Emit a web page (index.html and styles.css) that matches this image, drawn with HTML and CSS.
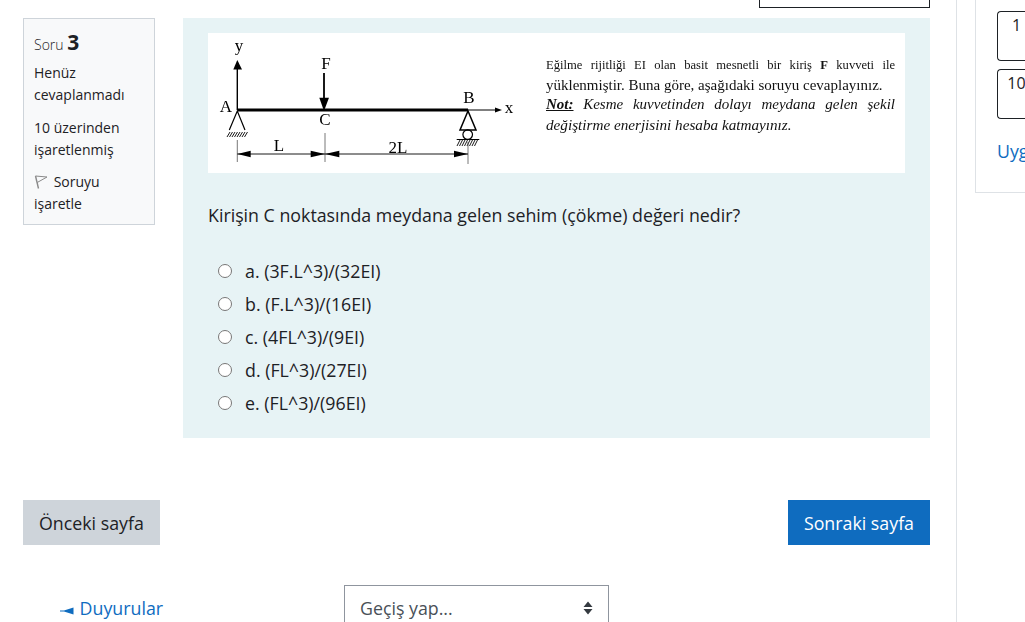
FILE: index.html
```html
<!DOCTYPE html>
<html lang="en">

<head>
    <title>Soru 3</title>
    <link rel="stylesheet" href="styles.css">
</head>

<body>
    <div class="page">
        <div class="main-col">
            <div class="top-row">
                <div class="top-box"></div>
            </div>

            <div class="question-row">
                <div class="info-box">
                    <h3 class="q-title">Soru <span class="q-no">3</span></h3>
                    <div class="q-state">Henüz cevaplanmadı</div>
                    <div class="q-state">10 üzerinden işaretlenmiş</div>
                    <div class="q-flag">
                        <svg class="flag-icon" width="14" height="14" viewBox="0 0 14 14">
                            <path d="M1.5 1 L13 2 L3.2 7.5" fill="none" stroke="#8a8a8a" stroke-width="1" />
                            <path d="M1.5 1 L4.5 13.5" fill="none" stroke="#8a8a8a" stroke-width="1.4" />
                        </svg>
                        Soruyu işaretle
                    </div>
                </div>

                <div class="question-box">
                    <div class="figure">
                        <svg class="beam" width="338" height="140" viewBox="0 0 338 140">
                            <g stroke="#000" fill="none">
                                <path d="M29.3 77 V34" stroke-width="1.4" />
                                <path d="M29.3 77 H260" stroke-width="3" />
                                <path d="M260 77 H290" stroke-width="1" />
                                <path d="M116 40 V68" stroke-width="1.8" />
                                <path d="M21.3 97 L29.3 78 L37 97" stroke-width="1.2" />
                                <path d="M260 78 L252 97 H268 Z" stroke-width="1.5" />
                                <circle cx="259.7" cy="101.6" r="4.8" stroke-width="1.2" />
                                <path d="M19 104 L22 99 M21.5 104 L24.5 99 M24 104 L27 99 M26.5 104 L29.5 99 M29 104 L32 99 M31.5 104 L34.5 99 M34 104 L37 99 M36.5 104 L39.5 99" stroke-width="0.9" />
                                <path d="M248.7 106.5 H271.3" stroke-width="1" />
                                <path d="M249 113 L252 107 M251.5 113 L254.5 107 M254 113 L257 107 M256.5 113 L259.5 107 M259 113 L262 107 M261.5 113 L264.5 107 M264 113 L267 107 M266.5 113 L269.5 107" stroke-width="0.9" />
                                <path d="M29.3 107 V129 M117 100 V129 M260 109 V131" stroke="#555" stroke-width="0.8" />
                                <path d="M29.3 121 H260" stroke-width="0.9" />
                            </g>
                            <g fill="#000">
                                <path d="M29.3 27 L25.3 36.5 H34 Z" />
                                <path d="M116 78 L111.3 64.7 H121 Z" />
                                <path d="M294 77 L287 74.5 V79.5 Z" />
                                <path d="M29.3 121 L42.7 117.7 V124.3 Z" />
                                <path d="M117 121 L102.7 117.7 V124.3 Z" />
                                <path d="M117 121 L131.3 117.7 V124.3 Z" />
                                <path d="M260 121 L246 117.7 V124.3 Z" />
                            </g>
                            <g class="beam-label">
                                <text x="31" y="18">y</text>
                                <text x="118" y="36">F</text>
                                <text x="18" y="79">A</text>
                                <text x="117" y="92">C</text>
                                <text x="261" y="70">B</text>
                                <text x="301" y="80">x</text>
                                <text x="71" y="118">L</text>
                                <text x="190" y="120">2L</text>
                            </g>
                        </svg>
                        <div class="figure-text">
                            <p>Eğilme rijitliği EI olan basit mesnetli bir kiriş <b>F</b> kuvveti ile</p>
                            <p class="big-line">yüklenmiştir. Buna göre, aşağıdaki soruyu cevaplayınız.</p>
                            <p class="note"><b><u>Not:</u></b> Kesme kuvvetinden dolayı meydana gelen şekil</p>
                            <p class="note-last">değiştirme enerjisini hesaba katmayınız.</p>
                        </div>
                    </div>

                    <p class="question-text">Kirişin C noktasında meydana gelen sehim (çökme) değeri nedir?</p>

                    <div class="answers">
                        <label class="answer"><input type="radio" name="q3">a. (3F.L^3)/(32EI)</label>
                        <label class="answer"><input type="radio" name="q3">b. (F.L^3)/(16EI)</label>
                        <label class="answer"><input type="radio" name="q3">c. (4FL^3)/(9EI)</label>
                        <label class="answer"><input type="radio" name="q3">d. (FL^3)/(27EI)</label>
                        <label class="answer"><input type="radio" name="q3">e. (FL^3)/(96EI)</label>
                    </div>
                </div>
            </div>

            <div class="nav-row">
                <button type="button" class="btn btn-grey">Önceki sayfa</button>
                <button type="button" class="btn btn-blue">Sonraki sayfa</button>
            </div>

            <div class="bottom-row">
                <a class="back-link" href="#">
                    <svg class="back-icon" width="14" height="8" viewBox="0 0 14 8"><path d="M0 3.4 H4 L13.5 0.5 V7.5 L4 4.6 H0 Z" fill="#0f6cbf" /></svg>
                    Duyurular
                </a>
                <div class="jump-select">
                    <span>Geçiş yap...</span>
                    <svg width="10" height="14" viewBox="0 0 10 14"><path d="M5 0.5 L9.5 6 H0.5 Z M5 13.5 L9.5 8 H0.5 Z" fill="#343a40" /></svg>
                </div>
            </div>
        </div>

        <div class="side-col">
            <div class="side-block">
                <div class="side-input">1</div>
                <div class="side-input">10</div>
                <a class="side-link" href="#">Uygula</a>
            </div>
        </div>
    </div>
</body>

</html>
```

FILE: styles.css
```css
html,
body {
    margin: 0;
    padding: 0;
    background-color: #fff;
    overflow: hidden;
}

body {
    font-family: "Open Sans", sans-serif;
    font-size: 17.8px;
    color: #1d2125;
}

.page {
    display: flex;
    height: 622px;
    width: 1025px;
    overflow: hidden;
}

.main-col {
    width: 957px;
    flex-shrink: 0;
    box-sizing: border-box;
    padding: 0 26px 0 23px;
    border-right: 1px solid #dee2e6;
}

.top-row {
    display: flex;
    justify-content: flex-end;
    height: 18px;
}

.top-box {
    width: 169px;
    height: 7px;
    border: 1px solid #1d2125;
    border-top: none;
}

.question-row {
    display: flex;
    align-items: flex-start;
    gap: 28px;
}

.info-box {
    width: 132px;
    height: 207px;
    flex-shrink: 0;
    box-sizing: border-box;
    padding: 10px 10px;
    background-color: #f8f9fa;
    border: 1px solid #ced4da;
    font-size: 14px;
    line-height: 22px;
}

.q-title {
    margin: 0 0 4px;
    font-size: 14px;
    font-weight: 300;
    line-height: 26px;
}

.q-no {
    font-size: 21px;
    font-weight: 700;
}

.q-state {
    margin-bottom: 11px;
}

.q-state + .q-flag {
    margin-top: -1px;
}

.flag-icon {
    vertical-align: -2px;
    margin-right: 2px;
}

.question-box {
    width: 747px;
    height: 420px;
    box-sizing: border-box;
    padding: 15px 25px;
    background-color: #e7f3f5;
}

.figure {
    display: flex;
    height: 140px;
    background-color: #fff;
    filter: blur(0.35px);
}

.beam-label {
    font-family: "Liberation Serif", serif;
    font-size: 17px;
    text-anchor: middle;
}

.figure-text {
    width: 349px;
    padding-top: 23px;
    font-family: "Liberation Serif", serif;
    font-size: 12.6px;
    color: #111;
}

.figure-text p {
    margin: 0;
    height: 19.7px;
    line-height: 19.7px;
    text-align: justify;
    text-align-last: justify;
}

.figure-text .big-line {
    font-size: 15px;
    text-align-last: left;
    white-space: nowrap;
}

.figure-text .note {
    font-size: 15px;
    font-style: italic;
}

.figure-text .note-last {
    font-size: 15.2px;
    font-style: italic;
    text-align-last: left;
}

.question-text {
    margin: 28px 0 25px;
    line-height: 28px;
}

.answers {
    display: flex;
    flex-direction: column;
}

.answer {
    display: flex;
    align-items: center;
    height: 33px;
}

.answer input {
    width: 14px;
    height: 14px;
    margin: 0 13px 0 10px;
}

.nav-row {
    display: flex;
    justify-content: space-between;
    margin-top: 62px;
}

.btn {
    height: 45px;
    padding: 0 16px;
    border: none;
    font-family: "Open Sans", sans-serif;
    font-size: 17.8px;
}

.btn-grey {
    background-color: #ced4da;
    color: #1d2125;
}

.btn-blue {
    background-color: #0f6cbf;
    color: #fff;
}

.bottom-row {
    display: flex;
    align-items: flex-start;
    margin-top: 40px;
    padding-left: 37px;
}

.back-link {
    width: 284px;
    padding-top: 10px;
    color: #0f6cbf;
    text-decoration: none;
    line-height: 26px;
}

.back-icon {
    margin-right: 1px;
}

.jump-select {
    display: flex;
    align-items: center;
    justify-content: space-between;
    box-sizing: border-box;
    width: 265px;
    height: 46px;
    padding: 0 15px;
    border: 1px solid #8f959e;
    color: #495057;
}

.side-col {
    flex: 1;
    padding-left: 18px;
}

.side-block {
    height: 193px;
    box-sizing: border-box;
    width: 80px;
    padding: 11px 0 0 21px;
    border-left: 1px solid #dee2e6;
    border-bottom: 1px solid #dee2e6;
}

.side-input {
    box-sizing: border-box;
    width: 38px;
    height: 50px;
    margin-bottom: 8px;
    border: 1px solid #1d2125;
    border-right: none;
    border-radius: 4px 0 0 4px;
    font-size: 16px;
    line-height: 26px;
    text-align: center;
}

.side-link {
    display: block;
    margin-top: 20px;
    color: #0f6cbf;
    text-decoration: none;
}
```
